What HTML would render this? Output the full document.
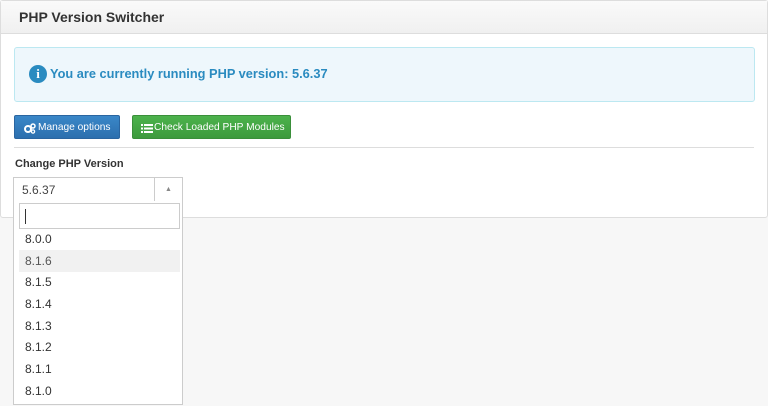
<!DOCTYPE html>
<html><head><style>
body{margin:0;width:768px;height:406px;background:#f7f7f7;font-family:"Liberation Sans",sans-serif;position:relative;overflow:hidden}
.panel{position:absolute;left:0;top:0;width:766px;height:216px;background:#fff;border:1px solid #ddd;border-radius:3px}
.hd{height:32px;background:linear-gradient(#fafafa,#f0f0f0);border-bottom:1px solid #ddd}
.hd span{position:absolute;left:18px;top:8px;font-size:14px;font-weight:bold;color:#333}
.alert{position:absolute;left:13px;top:46px;width:739px;height:53px;background:#eef7fc;border:1px solid #bce8f1;border-radius:3px}
.alert .t{position:absolute;left:35px;top:18px;font-size:12.8px;font-weight:bold;color:#2a8bc0}
.ic{position:absolute;left:14px;top:17px;width:18px;height:18px;border-radius:50%;background:#2a8bc0;color:#fff;font:bold 13px "Liberation Serif",serif;text-align:center;line-height:18px}
.btn{position:absolute;top:114px;height:24px;color:#fff;font-size:10.2px;line-height:24px;border-radius:2px;box-sizing:border-box;white-space:nowrap;overflow:hidden}
.b1{left:13px;width:106px;background:linear-gradient(#3a87c8,#2c6fae);border:1px solid #2a65a0;padding-left:23px}
.b2{left:131px;width:159px;background:linear-gradient(#4cb24c,#3d9a3d);border:1px solid #3a8f3a;padding-left:21px}
.hr{position:absolute;left:13px;top:146px;width:740px;height:1px;background:#ddd}
.lbl{position:absolute;left:14px;top:157px;font-size:11px;font-weight:bold;color:#333}
.sel{position:absolute;left:13px;top:177px;width:170px;height:25px;border:1px solid #ccc;box-sizing:border-box;background:#fff;font-size:12px;color:#444}
.sel span{position:absolute;left:8px;top:5px}
.arr{position:absolute;right:0;top:0;width:27px;height:23px;border-left:1px solid #ccc;font-size:7px;color:#888;text-align:center;line-height:23px}
.dd{position:absolute;left:13px;top:201px;width:170px;height:204px;border:1px solid #ccc;border-top:none;box-sizing:border-box;background:#fff}
.srch{position:absolute;left:5px;top:2px;width:161px;height:26px;border:1px solid #ccc;box-sizing:border-box}
.srch i{position:absolute;left:5px;top:5px;width:1px;height:15px;background:#333}
.it{position:absolute;left:5px;width:161px;height:22px;font-size:12px;color:#333;padding-left:6px;box-sizing:border-box;line-height:22px}
</style></head><body>
<div class="panel">
<div class="hd"><span>PHP Version Switcher</span></div>
<div class="alert"><div class="ic">i</div><div class="t">You are currently running PHP version: 5.6.37</div></div>
<div class="btn b1"><svg style="position:absolute;left:9px;top:7px" width="12" height="11" viewBox="0 0 12 11"><circle cx="4" cy="6" r="3" fill="none" stroke="#fff" stroke-width="2"/><circle cx="9" cy="3" r="2" fill="none" stroke="#fff" stroke-width="1.5"/><circle cx="9" cy="8.5" r="1.6" fill="none" stroke="#fff" stroke-width="1.3"/></svg>Manage options</div>
<div class="btn b2"><svg style="position:absolute;left:8px;top:8px" width="12" height="9" viewBox="0 0 12 9"><rect y="0" width="12" height="2" fill="#fff"/><rect y="3.5" width="12" height="2" fill="#fff"/><rect y="7" width="12" height="2" fill="#fff"/><rect x="2" width="1" height="9" fill="#4aa84a"/></svg>Check Loaded PHP Modules</div>
<div class="hr"></div>
<div class="lbl">Change PHP Version</div>
</div>
<div class="sel"><span>5.6.37</span><div class="arr">▲</div></div>
<div class="dd"><div class="srch"><i></i></div>
<div class="it" style="top:27px">8.0.0</div>
<div class="it" style="top:49px;background:#f1f1f1;color:#555">8.1.6</div>
<div class="it" style="top:70px">8.1.5</div>
<div class="it" style="top:92px">8.1.4</div>
<div class="it" style="top:114px">8.1.3</div>
<div class="it" style="top:135px">8.1.2</div>
<div class="it" style="top:157px">8.1.1</div>
<div class="it" style="top:179px">8.1.0</div>
</div>
</body></html>
